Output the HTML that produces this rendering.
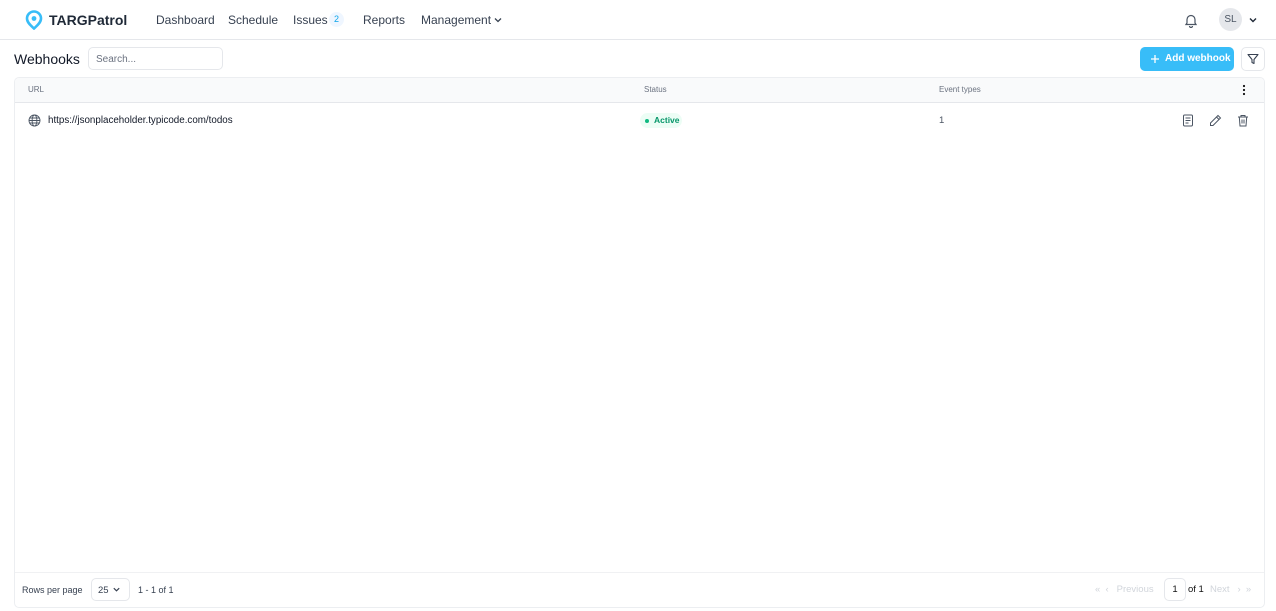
<!DOCTYPE html>
<html><head><meta charset="utf-8"><style>
*{box-sizing:border-box;margin:0;padding:0}
body{width:1276px;height:611px;overflow:hidden;background:#fff;font-family:"Liberation Sans",sans-serif;color:#1f2937;position:relative}
.abs{position:absolute;white-space:nowrap}
.nav{font-size:12px;color:#374151;top:13px}
</style></head><body>
<div class="abs" style="left:0;top:0;width:1276px;height:40px;border-bottom:1px solid #e5e7eb;background:#fff"></div>
<svg class="abs" style="left:25px;top:10px" width="18" height="20" viewBox="0 0 18 20"><path d="M9 1.5a7 7 0 0 0-7 7c0 4.5 5 8 7 10 2-2 7-5.5 7-10a7 7 0 0 0-7-7z" fill="none" stroke="#38bdf8" stroke-width="2.6"/><circle cx="9" cy="8.5" r="2.4" fill="#38bdf8"/></svg>
<div class="abs" style="left:49px;top:12px;font-size:14px;font-weight:bold;color:#1f2937">TARGPatrol</div>
<div class="abs nav" style="left:156px">Dashboard</div>
<div class="abs nav" style="left:228px">Schedule</div>
<div class="abs nav" style="left:293px">Issues</div>
<div class="abs" style="left:329px;top:12px;width:15px;height:15px;border-radius:8px;background:#eff6ff;color:#0ea5e9;font-size:9px;text-align:center;line-height:15px">2</div>
<div class="abs nav" style="left:363px">Reports</div>
<div class="abs nav" style="left:421px">Management</div>
<svg class="abs" style="left:493px;top:15px" width="10" height="10" viewBox="0 0 10 10"><path d="M2 3.5l3 3 3-3" fill="none" stroke="#374151" stroke-width="1.3"/></svg>
<svg class="abs" style="left:1184px;top:13px" width="14" height="15" viewBox="0 0 14 15"><path d="M3 10V6.5a4 4 0 0 1 8 0V10l1 1.5H2zM5.5 13a1.5 1.5 0 0 0 3 0" fill="none" stroke="#4b5563" stroke-width="1.2"/></svg>
<div class="abs" style="left:1219px;top:8px;width:23px;height:23px;border-radius:50%;background:#e5e7eb;font-size:10px;color:#4b5563;text-align:center;line-height:23px">SL</div>
<svg class="abs" style="left:1248px;top:15px" width="10" height="10" viewBox="0 0 10 10"><path d="M2 3.5l3 3 3-3" fill="none" stroke="#1f2937" stroke-width="1.4"/></svg>

<div class="abs" style="left:14px;top:51px;font-size:14px;color:#111827">Webhooks</div>
<div class="abs" style="left:88px;top:47px;width:135px;height:23px;border:1px solid #e5e7eb;border-radius:5px;font-size:10px;color:#6b7280;padding:6px 7px">Search...</div>
<div class="abs" style="left:1140px;top:47px;width:94px;height:24px;background:#38bdf8;border-radius:5px;color:#fff;font-size:10px;font-weight:bold;line-height:24px;padding-left:25px;overflow:hidden">Add webhook</div>
<svg class="abs" style="left:1150px;top:54px" width="10" height="10" viewBox="0 0 10 10"><path d="M5 1v8M1 5h8" stroke="#fff" stroke-width="1.3"/></svg>
<div class="abs" style="left:1241px;top:47px;width:24px;height:24px;border:1px solid #e5e7eb;border-radius:5px"></div>
<svg class="abs" style="left:1247px;top:53px" width="12" height="12" viewBox="0 0 12 12"><path d="M1 1.5h10L7 6.5v4l-2-1v-3z" fill="none" stroke="#374151" stroke-width="1.1" stroke-linejoin="round"/></svg>

<div class="abs" style="left:14px;top:77px;width:1251px;height:531px;border:1px solid #eceef1;border-radius:5px;overflow:hidden">
<div style="height:25px;background:#f9fafb;border-bottom:1px solid #e5e7eb"></div>
<div class="abs" style="left:0;top:494px;width:1251px;border-top:1px solid #f0f1f3"></div>
</div>
<div class="abs" style="left:28px;top:85px;font-size:8px;color:#6b7280">URL</div>
<div class="abs" style="left:644px;top:85px;font-size:8px;color:#6b7280">Status</div>
<div class="abs" style="left:939px;top:85px;font-size:8px;color:#6b7280">Event types</div>
<svg class="abs" style="left:1240px;top:84px" width="8" height="12" viewBox="0 0 8 12"><circle cx="4" cy="2" r="1.1" fill="#111"/><circle cx="4" cy="6" r="1.1" fill="#111"/><circle cx="4" cy="10" r="1.1" fill="#111"/></svg>
<svg class="abs" style="left:28px;top:114px" width="13" height="13" viewBox="0 0 13 13" fill="none" stroke="#4b5563" stroke-width="0.9"><circle cx="6.5" cy="6.5" r="5.5"/><ellipse cx="6.5" cy="6.5" rx="2.4" ry="5.5"/><path d="M1 6.5h11M1.8 4h9.4M1.8 9h9.4"/></svg>
<div class="abs" style="left:48px;top:115px;font-size:9.8px;color:#111827">https://jsonplaceholder.typicode.com/todos</div>
<div class="abs" style="left:640px;top:113px;width:42px;height:15px;border-radius:8px;background:#ecfdf5;font-size:8.5px;font-weight:bold;color:#059669;line-height:15px;padding-left:14px">Active</div>
<div class="abs" style="left:645px;top:119px;width:4px;height:4px;border-radius:50%;background:#10b981"></div>
<div class="abs" style="left:939px;top:115px;font-size:9.5px;color:#4b5563">1</div>
<svg class="abs" style="left:1182px;top:114px" width="12" height="13" viewBox="0 0 12 13" fill="none" stroke="#4b5563" stroke-width="1"><rect x="1.5" y="1" width="9" height="11" rx="1.2"/><path d="M3.5 4h5M3.5 6.5h5M3.5 9h3"/></svg>
<svg class="abs" style="left:1209px;top:114px" width="13" height="13" viewBox="0 0 13 13" fill="none" stroke="#4b5563" stroke-width="1"><path d="M9 1.5l2.5 2.5L4 11.5H1.5V9zM7.5 3l2.5 2.5"/></svg>
<svg class="abs" style="left:1237px;top:114px" width="12" height="13" viewBox="0 0 12 13" fill="none" stroke="#4b5563" stroke-width="1"><path d="M1 3h10M4 3V1.5h4V3M2.3 3l.7 9h6l.7-9M5 5.5v4M7 5.5v4"/></svg>

<div class="abs" style="left:22px;top:585px;font-size:9px;color:#374151">Rows per page</div>
<div class="abs" style="left:91px;top:578px;width:39px;height:23px;border:1px solid #e5e7eb;border-radius:5px;font-size:9.5px;color:#374151;padding:6px 6px">25</div>
<svg class="abs" style="left:112px;top:585px" width="9" height="9" viewBox="0 0 10 10"><path d="M2 3.5l3 3 3-3" fill="none" stroke="#374151" stroke-width="1.3"/></svg>
<div class="abs" style="left:138px;top:585px;font-size:9px;color:#374151">1 - 1 of 1</div>
<div class="abs" style="left:1095px;top:584px;font-size:9.5px;color:#d1d5db">« &nbsp;‹ &nbsp;&nbsp;Previous</div>
<div class="abs" style="left:1164px;top:578px;width:22px;height:23px;border:1px solid #e5e7eb;border-radius:5px;font-size:9.5px;text-align:center;line-height:21px;color:#111">1</div>
<div class="abs" style="left:1188px;top:584px;font-size:9.5px;color:#111">of 1</div>
<div class="abs" style="left:1210px;top:584px;font-size:9.5px;color:#d1d5db">Next &nbsp;&nbsp;› &nbsp;»</div>
</body></html>
